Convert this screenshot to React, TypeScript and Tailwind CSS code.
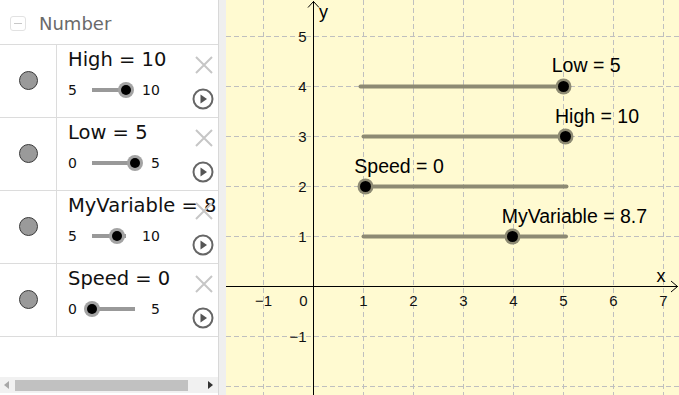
import React from "react";

const PANEL_FONT = { fontFamily: '"DejaVu Sans", sans-serif' };
const GRAPH_FONT = '"Liberation Sans", Arial, sans-serif';

interface SliderRow {
  title: string;
  min: string;
  max: string;
  trackW: number;
  frac: number;
}

const rows: SliderRow[] = [
  { title: "High = 10", min: "5", max: "10", trackW: 34, frac: 1 },
  { title: "Low = 5", min: "0", max: "5", trackW: 43, frac: 1 },
  { title: "MyVariable = 8.7", min: "5", max: "10", trackW: 34, frac: 0.74 },
  { title: "Speed = 0", min: "0", max: "5", trackW: 43, frac: 0 },
];

function AlgebraRow({ row }: { row: SliderRow }) {
  return (
    <div className="relative flex h-[73px] shrink-0 border-b border-[#dcdcdc]">
      <div className="flex w-[57px] shrink-0 items-center justify-center border-r border-[#dcdcdc] pb-[2px]">
        <div className="h-[19px] w-[19px] rounded-full border border-[#3a3a3a] bg-[#9a9a9a]" />
      </div>
      <div className="min-w-0 flex-1 overflow-hidden pl-[11px] pt-[4px]">
        <div className="whitespace-nowrap text-[19.5px] leading-[22px] text-[#111]">{row.title}</div>
        <div className="mt-[11px] flex h-[16px] items-center text-[14px] leading-[16px] text-[#111]">
          <span className="w-[24px] shrink-0">{row.min}</span>
          <div className="relative h-[4px] shrink-0 bg-[#999]" style={{ width: row.trackW }}>
            <div
              className="absolute top-1/2 h-[16px] w-[16px] -translate-x-1/2 -translate-y-1/2 rounded-full bg-[#a3a3a3]"
              style={{ left: row.frac * row.trackW }}
            >
              <div className="m-[3px] h-[10px] w-[10px] rounded-full bg-black" />
            </div>
          </div>
          <span className="ml-[16px] shrink-0">{row.max}</span>
        </div>
      </div>
      <svg className="absolute right-[5px] top-[11px]" width="18" height="18" viewBox="0 0 18 18">
        <path d="M1 1 L17 17 M17 1 L1 17" stroke="#c6c6c6" strokeWidth="2" fill="none" />
      </svg>
      <svg className="absolute right-[4px] top-[43px]" width="22" height="22" viewBox="0 0 22 22">
        <circle cx="11" cy="11" r="9.5" stroke="#666" strokeWidth="2" fill="none" />
        <path d="M8.5 6.5 L15 11 L8.5 15.5 Z" fill="#555" />
      </svg>
    </div>
  );
}

function AlgebraView() {
  return (
    <div className="flex h-full w-[219px] shrink-0 flex-col border-r border-[#d8d8d8] bg-white" style={PANEL_FONT}>
      <div className="flex h-[45px] shrink-0 items-center border-b border-[#dcdcdc] pl-[10px] pt-[3px]">
        <div className="flex h-[15px] w-[16px] items-center justify-center rounded-[3px] border border-[#e2e2e2]">
          <div className="h-[1.5px] w-[8px] bg-[#c8c8c8]" />
        </div>
        <span className="ml-[13px] text-[18px] leading-[21px] text-[#6a6a6a]">Number</span>
      </div>
      {rows.map((r) => (
        <AlgebraRow key={r.title} row={r} />
      ))}
      <div className="flex-1" />
      <div className="relative mb-[2px] h-[16px] shrink-0 bg-[#f1f1f1]">
        <svg className="absolute left-[4px] top-[4px]" width="6" height="8" viewBox="0 0 6 8">
          <path d="M5 0 L0 4 L5 8 Z" fill="#a8a8a8" />
        </svg>
        <div className="absolute left-[15px] top-[3px] h-[11px] w-[173px] bg-[#c1c1c1]" />
        <svg className="absolute left-[208px] top-[4px]" width="6" height="8" viewBox="0 0 6 8">
          <path d="M0 0 L5 4 L0 8 Z" fill="#333" />
        </svg>
      </div>
    </div>
  );
}

function Graphics() {
  const W = 453;
  const H = 395;
  const ox = 87.5;
  const oy = 286.5;
  const u = 50;
  const px = (v: number) => ox + v * u;
  const py = (v: number) => oy - v * u;
  const xs = [-1, 1, 2, 3, 4, 5, 6, 7];
  const ys = [-2, -1, 1, 2, 3, 4, 5];
  const lineColor = "#8d8a73";

  const sliders = [
    { y: 4, x1: 0.94, x2: 5, k: 5, label: "Low = 5", lx: 551.7, ly: 72.3 },
    { y: 3, x1: 1, x2: 5.04, k: 5.04, label: "High = 10", lx: 555, ly: 123.3 },
    { y: 2, x1: 1.04, x2: 5.06, k: 1.04, label: "Speed = 0", lx: 354.3, ly: 173.3 },
    { y: 1, x1: 1, x2: 5.05, k: 3.98, label: "MyVariable = 8.7", lx: 501.7, ly: 222.7 },
  ];

  return (
    <div className="h-full flex-1 bg-[#fffad1]">
      <svg width={W} height={H} viewBox={`0 0 ${W} ${H}`} style={{ fontFamily: GRAPH_FONT }}>
        {xs.map((k) => (
          <line key={"gx" + k} x1={px(k)} y1={0} x2={px(k)} y2={H} stroke="#bfbfbf" strokeWidth="1" strokeDasharray="5 3" />
        ))}
        {ys.map((k) => (
          <line key={"gy" + k} x1={0} y1={py(k)} x2={W} y2={py(k)} stroke="#bfbfbf" strokeWidth="1" strokeDasharray="5 3" />
        ))}
        {/* axes */}
        <line x1={0} y1={oy} x2={W - 1} y2={oy} stroke="#000" strokeWidth="1" />
        <path d={`M${W - 8} ${oy - 5.5} L${W - 1.5} ${oy} L${W - 8} ${oy + 5.5}`} stroke="#000" strokeWidth="1" fill="none" />
        <line x1={ox} y1={1} x2={ox} y2={H} stroke="#000" strokeWidth="1" />
        <path d={`M${ox - 5.5} 7.5 L${ox} 1.5 L${ox + 5.5} 7.5`} stroke="#000" strokeWidth="1" fill="none" />
        <text x={93} y={17.5} fontSize="18" fill="#000">y</text>
        <text x={430.5} y={282} fontSize="18" fill="#000">x</text>
        {/* tick labels */}
        {xs.map((k) => (
          <text key={"lx" + k} x={px(k)} y={306} fontSize="15" textAnchor="middle" fill="#111">
            {k < 0 ? "\u2212" + Math.abs(k) : k}
          </text>
        ))}
        <text x={ox - 6} y={306} fontSize="15" textAnchor="end" fill="#111">0</text>
        {[5, 4, 3, 2, 1, -1].map((k) => (
          <text key={"ly" + k} x={ox - 7} y={py(k) + 5.2} fontSize="15" textAnchor="end" fill="#111">
            {k < 0 ? "\u2212" + Math.abs(k) : k}
          </text>
        ))}
        {/* sliders */}
        {sliders.map((s) => (
          <g key={s.label}>
            <line x1={px(s.x1)} y1={py(s.y)} x2={px(s.x2)} y2={py(s.y)} stroke={lineColor} strokeWidth="4" strokeLinecap="round" />
            <circle cx={px(s.k)} cy={py(s.y)} r="8" fill={lineColor} />
            <circle cx={px(s.k)} cy={py(s.y)} r="5.5" fill="#000" />
            <text x={s.lx - 226} y={s.ly} fontSize="19.5" fill="#000">{s.label}</text>
          </g>
        ))}
      </svg>
    </div>
  );
}

export default function App() {
  return (
    <div className="flex h-[395px] w-[679px] overflow-hidden bg-white">
      <AlgebraView />
      <div className="h-full w-[7px] shrink-0 bg-[#efefef]" />
      <Graphics />
    </div>
  );
}
